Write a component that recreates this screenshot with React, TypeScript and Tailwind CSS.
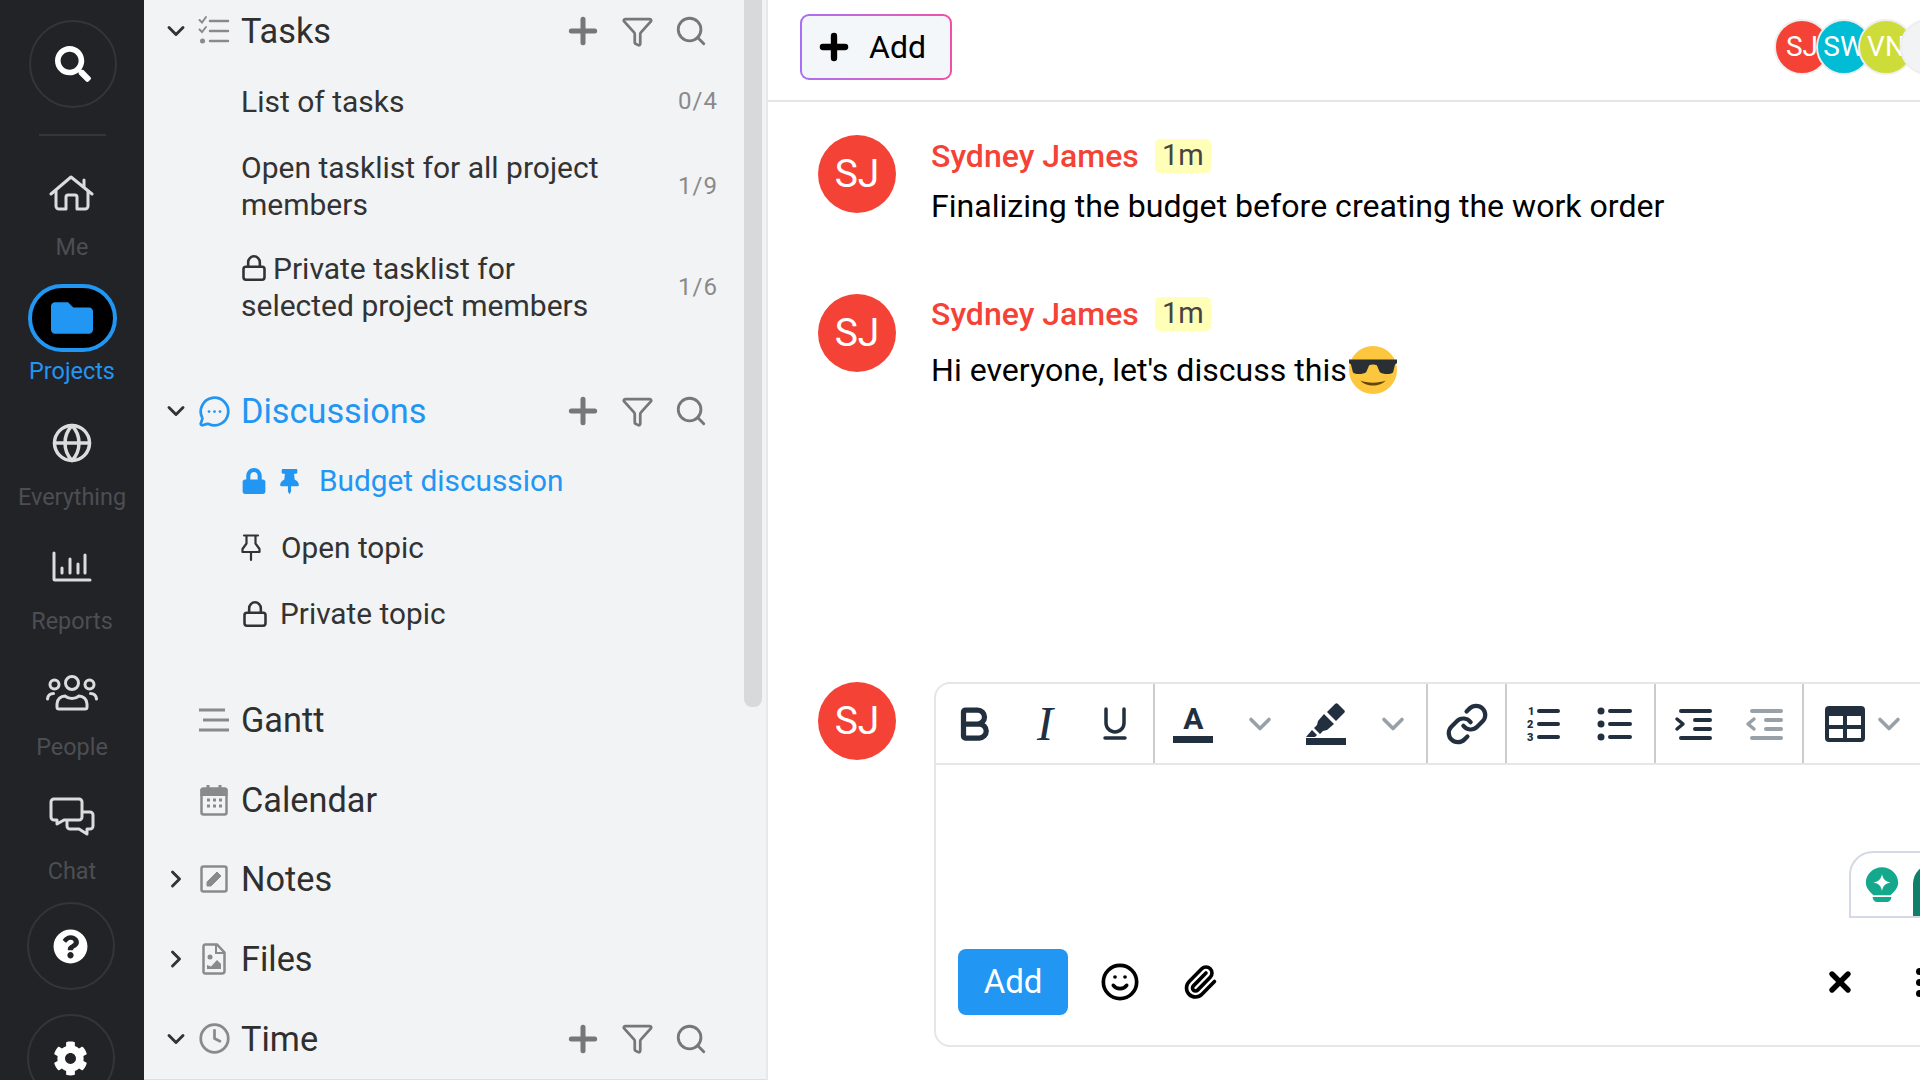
import {
  ChevronDown,
  ChevronRight,
  Plus,
  Funnel,
  Search,
  Clock,
  Lock,
  MessageCircleMore,
  Globe,
  Bold,
  Link,
  X,
  Smile,
  Paperclip,
} from 'lucide-react';
import { FaSearch, FaQuestionCircle, FaCog, FaThumbtack, FaLock, FaFolder } from 'react-icons/fa';

function HomeIcon() {
  return (
    <svg width="46" height="36" viewBox="0 0 46 36" fill="none" stroke="#dcdcdc" strokeWidth="3" strokeLinejoin="round" strokeLinecap="round">
      <path d="M2 19 22 2l21 17" />
      <path d="M35 5v7" />
      <path d="M7 16v15a3 3 0 0 0 3 3h7V22a2 2 0 0 1 2-2h7a2 2 0 0 1 2 2v12h8a3 3 0 0 0 3-3V16" />
    </svg>
  );
}

function ReportsIcon() {
  return (
    <svg width="40" height="32" viewBox="0 0 40 32" fill="none" stroke="#dcdcdc" strokeWidth="3" strokeLinecap="round">
      <path d="M2 2v26a1 1 0 0 0 1 1h35" />
      <path d="M10 17v5M18 8v14M26 13v9M33 4v18" />
    </svg>
  );
}

function PeopleIcon() {
  return (
    <svg width="52" height="36" viewBox="0 0 52 36" fill="none" stroke="#dcdcdc" strokeWidth="3" strokeLinecap="round">
      <circle cx="26" cy="8" r="6.5" />
      <circle cx="8.5" cy="9.5" r="4.5" />
      <circle cx="43.5" cy="9.5" r="4.5" />
      <path d="M13 34a2 2 0 0 1-2-2v-3c0-5 4-8 8-8 2 1.600 5 2.500 7 2.500s5-.9 7-2.500c4 0 8 3 8 8v3a2 2 0 0 1-2 2z" />
      <path d="M1.500 24c.5-4 3-5.500 6-5.500M50.500 24c-.5-4-3-5.500-6-5.500" />
    </svg>
  );
}

function ChatIcon() {
  return (
    <svg width="46" height="40" viewBox="0 0 46 40" fill="none" stroke="#dcdcdc" strokeWidth="3" strokeLinejoin="round">
      <path d="M5 2h25a3 3 0 0 1 3 3v15a3 3 0 0 1-3 3H15l-7 4v-4H5a3 3 0 0 1-3-3V5a3 3 0 0 1 3-3z" />
      <path d="M33 15h8a3 3 0 0 1 3 3v11a3 3 0 0 1-3 3h-3v5l-8-5h-9a3 3 0 0 1-3-3v-5" />
    </svg>
  );
}

function TasksIcon() {
  return (
    <svg width="32" height="32" viewBox="0 0 32 32" fill="none" stroke="#8a8a8a" strokeLinecap="round">
      <path d="M12 6h18M12 16h18M12 26h18" strokeWidth="2.500" />
      <path d="M1.500 5 4 7.500 8 2M1.500 14.500 4 17l4-5" strokeWidth="2" />
      <circle cx="4.500" cy="26" r="2.500" fill="#8a8a8a" stroke="none" />
    </svg>
  );
}

function GanttIcon() {
  return (
    <svg width="32" height="26" viewBox="0 0 32 26" fill="none" stroke="#8a8a8a" strokeWidth="3">
      <path d="M1 3h26M5 13h26M1 23h30" />
    </svg>
  );
}

function CalendarIcon() {
  return (
    <svg width="28" height="32" viewBox="0 0 28 32" fill="none" stroke="#8a8a8a">
      <rect x="1.500" y="4.500" width="25" height="26" rx="2" strokeWidth="2.500" />
      <path d="M1.500 6h25v5h-25z" fill="#8a8a8a" strokeWidth="2" />
      <path d="M8 1v5M20 1v5" strokeWidth="3" />
      <path d="M7 16h3M13 16h3M19 16h3M7 22h3M13 22h3M19 22h3" strokeWidth="3" />
    </svg>
  );
}

function NotesIcon() {
  return (
    <svg width="28" height="28" viewBox="0 0 28 28" fill="none" stroke="#8a8a8a">
      <rect x="1.500" y="1.500" width="25" height="25" rx="2" strokeWidth="2.500" />
      <path d="M7 21v-4L17 7l4 4-10 10z" fill="#8a8a8a" strokeWidth="1" />
    </svg>
  );
}

function FilesIcon() {
  return (
    <svg width="24" height="32" viewBox="0 0 24 32" fill="none" stroke="#8a8a8a">
      <path d="M3 1.500h12l7.500 8V28a2.500 2.500 0 0 1-2.500 2.500H3A2 2 0 0 1 1.500 28V3A2 2 0 0 1 3 1.500z" strokeWidth="2.500" />
      <path d="M14 2v8h8" strokeWidth="2" />
      <circle cx="8" cy="14" r="2.500" fill="#8a8a8a" stroke="none" />
      <path d="M5 26v-4l4 1.500L15 17l4 4v5z" fill="#8a8a8a" stroke="none" />
    </svg>
  );
}

function OutlinePin() {
  return (
    <svg width="20" height="28" viewBox="0 0 20 28" fill="none" stroke="#333" strokeWidth="2.200" strokeLinejoin="round" strokeLinecap="round">
      <path d="M3 1.500h14M5.500 1.500v8L1.500 15v3h17v-3l-4-5.500v-8" />
      <path d="M10 18v8" />
    </svg>
  );
}

function CoolEmoji() {
  return (
    <svg width="48" height="48" viewBox="0 0 50 50" className="ml-[2px]">
      <circle cx="25" cy="25" r="25" fill="#fcc63f" />
      <path d="M0 14h50v4l-2 1-2 8c-1 3-11 3-14 0l-3-7c-2-1-6-1-8 0l-3 7c-3 3-13 3-14 0L2 19l-2-1z" fill="#292f33" />
      <path d="M12 36c5 7 21 7 26 0-6 3-20 3-26 0z" fill="#664500" />
    </svg>
  );
}

function Bulb() {
  return (
    <svg width="34" height="42" viewBox="0 0 40 42">
      <path d="M20 0c10 0 19 8 19 18 0 7-5 11-9 15H10C6 29 1 25 1 18 1 8 10 0 20 0z" fill="#14a98d" />
      <path d="M9 35h22c0 4-3 6-6 6H15c-3 0-6-2-6-6z" fill="#14a98d" />
      <path d="M20 8c1 6 4 9 10 10-6 1-9 4-10 10-1-6-4-9-10-10 6-1 9-4 10-10z" fill="#fff" />
    </svg>
  );
}

function UnderlineIcon() {
  return (
    <svg width="24" height="34" viewBox="0 0 24 34" fill="none" stroke="currentColor" strokeWidth="3.500" strokeLinecap="round">
      <path d="M3 2v14a9 9 0 0 0 18 0V2" />
      <path d="M2 31h20" />
    </svg>
  );
}

function HighlightIcon() {
  return (
    <svg width="42" height="42" viewBox="0 0 42 42" fill="currentColor">
      <path d="M30 1a2 2 0 0 1 3 0l6 6a2 2 0 0 1 0 3l-8 8-9-9z" />
      <path d="M19 11l10 10-7 6-4 1-3 3-6-6 3-3 1-4z" />
      <path d="M7 27l5 5-2 2H1z" />
      <rect x="1" y="35" width="40" height="7" />
    </svg>
  );
}

function OrderedIcon() {
  return (
    <svg width="36" height="36" viewBox="0 0 36 36" fill="none" stroke="currentColor" strokeWidth="4" strokeLinecap="round">
      <path d="M14 5h19M14 18h19M14 31h19" />
      <g fontFamily="Roboto, sans-serif" fontWeight="900" fontSize="11" fill="currentColor" stroke="none">
        <text x="3" y="9">1</text>
        <text x="2" y="22">2</text>
        <text x="2" y="35">3</text>
      </g>
    </svg>
  );
}

function BulletIcon() {
  return (
    <svg width="36" height="36" viewBox="0 0 36 36" fill="none" stroke="currentColor" strokeWidth="4" strokeLinecap="round">
      <path d="M13 5h20M13 18h20M13 31h20" />
      <circle cx="4" cy="5" r="3.500" fill="currentColor" stroke="none" />
      <circle cx="4" cy="18" r="3.500" fill="currentColor" stroke="none" />
      <circle cx="4" cy="31" r="3.500" fill="currentColor" stroke="none" />
    </svg>
  );
}

function IndentIcon({ out }: { out?: boolean }) {
  return (
    <svg width="38" height="36" viewBox="0 0 38 36" fill="none" stroke="currentColor" strokeWidth="4" strokeLinecap="round" strokeLinejoin="round">
      <path d="M7 5h29M21 14h15M21 23h15M7 32h29" />
      <path d={out ? 'M9 13l-6 5 6 5' : 'M3 13l6 5-6 5'} strokeWidth="3.500" />
    </svg>
  );
}

function TableIcon() {
  return (
    <svg width="40" height="36" viewBox="0 0 40 36" fill="currentColor">
      <rect width="40" height="36" rx="4" />
      <rect x="4" y="10" width="14" height="9" fill="#fff" />
      <rect x="22" y="10" width="14" height="9" fill="#fff" />
      <rect x="4" y="23" width="14" height="9" fill="#fff" />
      <rect x="22" y="23" width="14" height="9" fill="#fff" />
    </svg>
  );
}

function RailItem({ icon, label, className }: { icon: React.ReactNode; label: string; className: string }) {
  return (
    <div className={`flex flex-col items-center shrink-0 ${className}`}>
      <div className="h-[60px] flex items-center justify-center">{icon}</div>
      <div className="mt-[9px] text-[23.4px] leading-[30px] text-[#4c4e53]">{label}</div>
    </div>
  );
}

function SectionHead({
  label,
  icon,
  open,
  actions,
  active,
  className = 'h-[79.75px]',
}: {
  label: string;
  icon: React.ReactNode;
  open?: boolean;
  actions?: boolean;
  active?: boolean;
  className?: string;
}) {
  return (
    <div className={`flex items-center ${className}`}>
      <div className="w-[52px] flex justify-center shrink-0 ml-[6px]">
        {open === true && <ChevronDown size={28} strokeWidth={2.5} color="#333" />}
        {open === false && <ChevronRight size={28} strokeWidth={2.5} color="#333" />}
      </div>
      <div className="w-[36px] flex justify-center shrink-0 -ml-[6px]">{icon}</div>
      <div className={`ml-[9px] text-[34.3px] leading-[40px] ${active ? 'text-[#2196f3]' : 'text-[#2f2f2f]'}`}>{label}</div>
      {actions && (
        <div className="ml-auto flex items-center mr-[48px]">
          <div className="w-[54px] flex justify-center"><Plus size={40} strokeWidth={3} color="#777" /></div>
          <div className="w-[54px] flex justify-center"><Funnel size={33} strokeWidth={2} color="#777" /></div>
          <div className="w-[54px] flex justify-center"><Search size={34} strokeWidth={2} color="#777" /></div>
        </div>
      )}
    </div>
  );
}

function TaskRow({ count, className, children }: { count: string; className: string; children: React.ReactNode }) {
  return (
    <div className={`flex items-center pl-[97px] pr-[48px] ${className}`}>
      <div className="w-[380px] text-[30px] leading-[37px] text-[#333]">{children}</div>
      <div className="ml-auto text-[24px] text-[#8a8a8a] tracking-[1px]">{count}</div>
    </div>
  );
}

function TopicRow({ icon, label, active, className }: { icon: React.ReactNode; label: string; active?: boolean; className: string }) {
  return (
    <div className={`flex items-center pl-[97px] ${className}`}>
      {icon}
      <div className={`text-[29.8px] ${active ? 'text-[#2196f3]' : 'text-[#333]'}`}>{label}</div>
    </div>
  );
}

function Avatar({ text, color, small }: { text: string; color: string; small?: boolean }) {
  if (small) {
    return (
      <div className={`w-[56px] h-[56px] -ml-[14px] first:ml-0 rounded-full border-2 border-[#eeeeee] flex items-center justify-center overflow-hidden text-white text-[28px] shrink-0 ${color}`}>
        {text}
      </div>
    );
  }
  return (
    <div className={`w-[78px] h-[78px] rounded-full flex items-center justify-center text-white text-[39px] shrink-0 ${color}`}>
      {text}
    </div>
  );
}

function Message({ className, nameClass, children }: { className: string; nameClass: string; children: React.ReactNode }) {
  return (
    <div className={`flex pl-[50px] ${className}`}>
      <Avatar text="SJ" color="bg-[#f44336]" />
      <div className="ml-[35px]">
        <div className={`flex items-center h-[34px] ${nameClass}`}>
          <span className="text-[32px] font-medium text-[#f44336]">Sydney James</span>
          <span className="ml-[16px] w-[56px] h-[34px] flex items-center justify-center rounded-[5px] bg-[#ffffb8] text-[29px] text-[#444]">1m</span>
        </div>
        {children}
      </div>
    </div>
  );
}

export default function App() {
  return (
    <div className="h-[1080px] w-[1920px] flex overflow-hidden bg-white font-['Roboto',sans-serif]">
      {/* Left rail */}
      <div className="w-[144px] shrink-0 bg-[#212327] flex flex-col items-center overflow-hidden">
        <div className="mt-[20px] ml-[2px] w-[88px] h-[88px] shrink-0 rounded-full border-2 border-[#33353a] flex items-center justify-center">
          <FaSearch size={36} color="#fff" />
        </div>
        <div className="mt-[26px] w-[67px] h-[2px] shrink-0 bg-[#33353a]" />
        <RailItem className="mt-[27px]" icon={<HomeIcon />} label="Me" />
        <div className="mt-[22px] shrink-0 flex flex-col items-center">
          <div className="w-[89px] h-[68px] rounded-[34px] border-4 border-[#2196f3] bg-black flex items-center justify-center">
            <FaFolder size={42} color="#2196f3" />
          </div>
          <div className="mt-[4px] text-[23.4px] leading-[30px] text-[#2196f3]">Projects</div>
        </div>
        <RailItem className="mt-[27px]" icon={<Globe size={42} color="#dcdcdc" strokeWidth={2} />} label="Everything" />
        <RailItem className="mt-[25px]" icon={<ReportsIcon />} label="Reports" />
        <RailItem className="mt-[27px]" icon={<PeopleIcon />} label="People" />
        <RailItem className="mt-[25px]" icon={<ChatIcon />} label="Chat" />
        <div className="mt-[16px] w-[88px] h-[88px] -ml-[3px] shrink-0 rounded-full border-2 border-[#33353a] flex items-center justify-center">
          <FaQuestionCircle size={35} color="#fff" />
        </div>
        <div className="mt-[24px] w-[88px] h-[88px] -ml-[3px] shrink-0 rounded-full border-2 border-[#33353a] flex items-center justify-center">
          <FaCog size={35} color="#fff" />
        </div>
      </div>

      {/* Project sidebar */}
      <div className="relative w-[624px] shrink-0 h-[1080px] overflow-hidden bg-[#f2f3f5] border-r-2 border-[#e8e8e8]">
        <div className="absolute left-[600px] top-0 w-[18px] h-[707px] rounded-b-[8px] bg-[#d8d9db]" />
        <SectionHead label="Tasks" open actions icon={<TasksIcon />} className="h-[62px]" />
        <TaskRow count="0/4" className="h-[78px]">List of tasks</TaskRow>
        <TaskRow count="1/9" className="h-[92px]">Open tasklist for all project members</TaskRow>
        <TaskRow count="1/6" className="h-[110px]">
          <Lock size={28} strokeWidth={2.2} className="inline -mt-[6px] mr-[5px] -ml-[1px]" color="#333" />
          Private tasklist for selected project members
        </TaskRow>
        <div className="mt-[29px]">
          <SectionHead label="Discussions" open actions active icon={<MessageCircleMore size={33} strokeWidth={2} color="#2196f3" />} className="h-[80px]" />
        </div>
        <TopicRow
          active
          className="h-[60px]"
          label="Budget discussion"
          icon={
            <>
              <FaLock size={26} color="#2196f3" />
              <FaThumbtack size={25} color="#2196f3" className="ml-[10px] mr-[17px]" />
            </>
          }
        />
        <TopicRow className="h-[74px]" label="Open topic" icon={<span className="mr-[20px] flex"><OutlinePin /></span>} />
        <TopicRow className="h-[58px]" label="Private topic" icon={<Lock size={28} strokeWidth={2.2} color="#333" className="mr-[11px]" />} />
        <div className="mt-[37px]">
          <SectionHead label="Gantt" icon={<GanttIcon />} />
          <SectionHead label="Calendar" icon={<CalendarIcon />} />
          <SectionHead label="Notes" open={false} icon={<NotesIcon />} />
          <SectionHead label="Files" open={false} icon={<FilesIcon />} />
          <SectionHead label="Time" open actions icon={<Clock size={33} strokeWidth={2} color="#8a8a8a" />} />
        </div>
        <div className="h-[2px] bg-[#dedede]" />
      </div>

      {/* Main pane */}
      <div className="flex-1 min-w-0 overflow-hidden">
        <div className="h-[102px] flex items-center border-b-2 border-[#e5e5e5]">
          <div className="ml-[32px] -mt-[7px] w-[152px] h-[66px] rounded-[9px] bg-gradient-to-r from-[#a76ff5] to-[#f04fa5] p-[2px]">
            <div className="h-full rounded-[7px] bg-[#f3f7f9] flex items-center pl-[13px]">
              <Plus size={38} strokeWidth={4} color="#000" />
              <span className="ml-[16px] text-[32px] text-black">Add</span>
            </div>
          </div>
          <div className="ml-auto -mt-[7px] flex items-center -mr-[36px]">
            <Avatar small text="SJ" color="bg-[#f44336]" />
            <Avatar small text="SW" color="bg-[#00bcd4]" />
            <Avatar small text="VN" color="bg-[#cddc39]" />
            <Avatar small text="" color="bg-[#f2f3f5]" />
          </div>
        </div>

        <Message className="pt-[33px]" nameClass="mt-[4px]">
          <div className="mt-[13px] text-[32.1px] leading-[40px] text-black whitespace-nowrap">Finalizing the budget before creating the work order</div>
        </Message>
        <Message className="pt-[68px]" nameClass="mt-[3px]">
          <div className="mt-[14px] flex items-center h-[50px] text-[32.1px] text-black whitespace-nowrap">
            Hi everyone, let's discuss this
            <CoolEmoji />
          </div>
        </Message>

        {/* Editor */}
        <div className="flex pl-[50px] pt-[287px]">
          <Avatar text="SJ" color="bg-[#f44336]" />
          <div className="relative ml-[38px] w-[1100px] h-[365px] rounded-tl-[16px] rounded-bl-[16px] border-2 border-[#e6e6e6] shrink-0">
            <div className="h-[81px] flex items-stretch border-b-2 border-[#e6e6e6] text-[#222f3e]">
              <div className="w-[219px] pl-[4px] flex items-center border-r-2 border-[#cccccc]">
                <div className="w-[70px] flex justify-center"><Bold size={42} strokeWidth={3} className="-ml-[2px]" /></div>
                <div className="w-[70px] flex justify-center font-['Liberation_Serif',serif] italic text-[48px] leading-none">I</div>
                <div className="w-[70px] flex justify-center"><UnderlineIcon /></div>
              </div>
              <div className="w-[273px] pl-[5px] flex items-center border-r-2 border-[#cccccc]">
                <div className="w-[67px] flex flex-col items-center">
                  <span className="font-bold text-[30px] leading-[28px]">A</span>
                  <div className="w-[40px] h-[7px] mt-[3px] bg-[#222f3e]" />
                </div>
                <div className="w-[67px] flex justify-center"><ChevronDown size={36} strokeWidth={2.4} color="#98a0a8" /></div>
                <div className="w-[67px] flex justify-center"><HighlightIcon /></div>
                <div className="w-[67px] flex justify-center"><ChevronDown size={36} strokeWidth={2.4} color="#98a0a8" /></div>
              </div>
              <div className="w-[79px] flex items-center justify-center border-r-2 border-[#cccccc]"><Link size={44} strokeWidth={2.3} /></div>
              <div className="w-[149px] flex items-center border-r-2 border-[#cccccc]">
                <div className="w-[72px] flex justify-center"><OrderedIcon /></div>
                <div className="w-[72px] flex justify-center"><BulletIcon /></div>
              </div>
              <div className="w-[148px] pl-[1px] flex items-center border-r-2 border-[#cccccc]">
                <div className="w-[71px] flex justify-center"><IndentIcon /></div>
                <div className="w-[71px] flex justify-center text-[#98a0a8]"><IndentIcon out /></div>
              </div>
              <div className="pl-[21px] flex items-center">
                <TableIcon />
                <ChevronDown size={36} strokeWidth={2.4} color="#98a0a8" className="ml-[6px]" />
              </div>
            </div>
            <div className="absolute left-[913px] top-[167px] w-[200px] h-[67px] rounded-tl-[24px] border-2 border-[#d5d8e5] bg-white flex items-center pl-[14px] gap-[14px]">
              <Bulb />
              <div className="w-[40px] h-[52px] rounded-t-[20px] bg-[#0f7f6c] mt-[10px]" />
            </div>
            <div className="flex items-center pt-[184px] pl-[22px]">
              <div className="w-[110px] h-[66px] rounded-[8px] bg-[#2196f3] text-white text-[33px] flex items-center justify-center">Add</div>
              <Smile size={40} strokeWidth={2.2} color="#000" className="ml-[32px]" />
              <Paperclip size={36} strokeWidth={2.4} color="#000" className="ml-[42px]" />
              <X size={32} strokeWidth={4} color="#000" className="ml-[606px]" />
              <div className="ml-[60px] flex flex-col gap-[4px]">
                <div className="w-[7px] h-[7px] rounded-full bg-black" />
                <div className="w-[7px] h-[7px] rounded-full bg-black" />
                <div className="w-[7px] h-[7px] rounded-full bg-black" />
              </div>
            </div>
          </div>
        </div>
      </div>
    </div>
  );
}
